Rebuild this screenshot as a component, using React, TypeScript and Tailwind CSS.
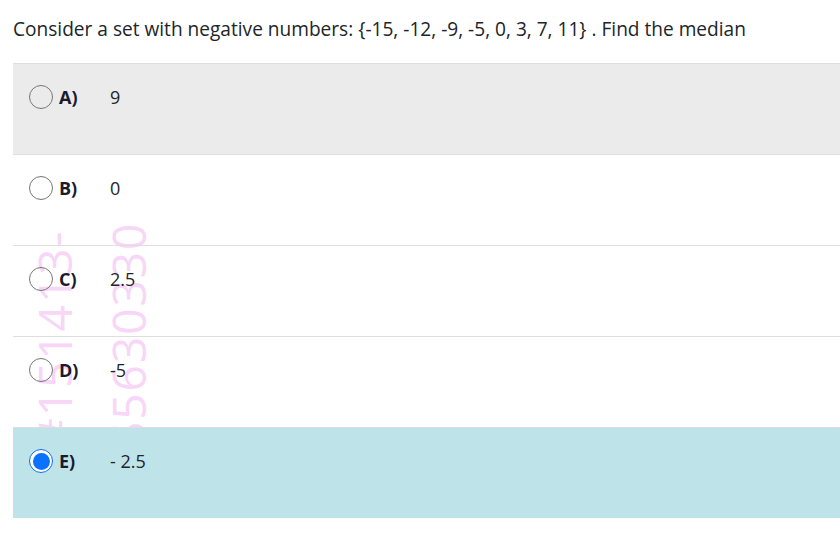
import React from "react";

type Opt = { key: string; value: string; bg: string; checked?: boolean };

const OPTIONS: Opt[] = [
  { key: "A)", value: "9", bg: "bg-[#ebebeb]" },
  { key: "B)", value: "0", bg: "bg-transparent" },
  { key: "C)", value: "2.5", bg: "bg-transparent" },
  { key: "D)", value: "-5", bg: "bg-transparent" },
  { key: "E)", value: "- 2.5", bg: "bg-[#bee4ea]", checked: true },
];

export default function App() {
  return (
    <div className="relative h-[557px] w-[840px] overflow-hidden bg-white pl-[13px] text-[#212529] [font-family:'Open_Sans','Noto_Sans',sans-serif]">
      <p className="pt-[16px] pb-[21px] text-[19.1px] leading-[26px]">
        Consider a set with negative numbers: {"{"}-15, -12, -9, -5, 0, 3, 7, 11{"}"} . Find the median
      </p>

      {/* watermark, sits under the coloured rows */}
      <span className="pointer-events-none absolute left-[31px] top-[448px] origin-top-left -rotate-90 whitespace-nowrap text-[46px] leading-none tracking-[2px] text-[#f7d6f7]">
        #151413-
      </span>
      <span className="pointer-events-none absolute left-[105px] top-[448px] origin-top-left -rotate-90 whitespace-nowrap text-[46px] leading-none tracking-[2px] text-[#f7d6f7]">
        55630330
      </span>

      <div className="relative">
        {OPTIONS.map((o) => (
          <div
            key={o.key}
            className={`relative flex h-[91px] items-start border-t border-[#dedede] pt-[21px] pl-[16px] ${o.bg} ${o.checked ? "z-10" : ""}`}
          >
            {o.checked ? (
              <span className="flex h-[24px] w-[24px] items-center justify-center rounded-full border-[1.5px] border-[#0b6cf0] bg-white">
                <span className="h-[17px] w-[17px] rounded-full bg-[#0a72ff]" />
              </span>
            ) : (
              <span className="h-[24px] w-[24px] rounded-full border-[1.5px] border-[#767676]" />
            )}
            <span className="ml-[6px] w-[51px] text-[18px] leading-[24px] font-bold text-[#1a1a2e]">{o.key}</span>
            <span className="text-[18px] leading-[24px]">{o.value}</span>
          </div>
        ))}
      </div>
    </div>
  );
}
